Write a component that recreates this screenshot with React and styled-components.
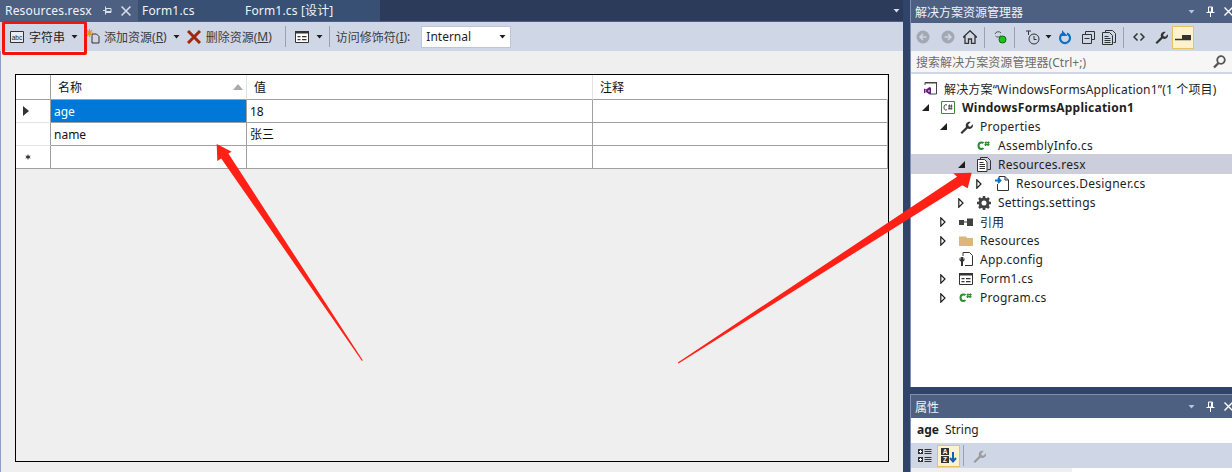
import React from "react";
import styled, { createGlobalStyle } from "styled-components";

const Global = createGlobalStyle`
  html, body { margin: 0; padding: 0; background: #2f4468; }
  body { font-family: "Noto Sans", "Noto Sans CJK SC", sans-serif; font-size: 12px; color: #1e1e1e; }
  #root { width: 1232px; height: 472px; overflow: hidden; }
`;

const Page = styled.div`
  position: relative;
  width: 1232px;
  height: 472px;
  display: flex;
  overflow: hidden;
  background: #2f4468;
`;

const DocColumn = styled.div`
  width: 903px;
  height: 472px;
  display: flex;
  flex-direction: column;
  background: #efefef;
  margin-right: 7px;
`;

const TabBar = styled.div`
  height: 21px;
  flex: none;
  display: flex;
  align-items: center;
  background: #2b3b59;
  border-bottom: 1px solid #4d6082;
`;

const Tab = styled.div`
  height: 21px;
  width: ${p => p.$w}px;
  padding-left: ${p => p.$pad}px;
  box-sizing: border-box;
  display: flex;
  align-items: center;
  background: ${p => (p.$active ? "#4d6082" : "#375074")};
  color: #f1f3f8;
  letter-spacing: 0.17px;
  line-height: 21px;
  white-space: nowrap;
`;

const TabButton = styled.span`
  display: inline-flex;
  margin-left: ${p => p.$ml}px;
`;

const TabFiller = styled.div`
  flex: 1;
  height: 21px;
  display: flex;
  align-items: center;
  justify-content: flex-end;
  padding-right: 3px;
`;

const Toolbar = styled.div`
  flex: none;
  height: ${p => p.$h}px;
  display: flex;
  align-items: center;
  padding-left: ${p => p.$pad || 0}px;
  background: #cfd6e5;
  box-sizing: border-box;
`;

const ToolItem = styled.span`
  flex: none;
  display: inline-flex;
  align-items: center;
  margin-left: ${p => p.$ml || 0}px;
  color: ${p => (p.$dim ? "#3c3c3c" : "#1e1e1e")};
  white-space: nowrap;
`;

const Sep = styled.span`
  flex: none;
  width: 1px;
  height: 21px;
  background: #99a1b3;
  margin-left: ${p => p.$ml}px;
`;

const Select = styled.div`
  flex: none;
  width: 90px;
  height: 22px;
  box-sizing: border-box;
  margin-left: ${p => p.$ml}px;
  padding: 0 4px;
  display: flex;
  align-items: center;
  justify-content: space-between;
  background: #fff;
  border: 1px solid #bcc5dc;
  color: #1e1e1e;
`;

const DocBody = styled.div`
  flex: 1;
  padding: 23px 0 10px 15px;
  box-shadow: inset 1px 0 0 #8f9dc6;
  display: flex;
`;

const GridFrame = styled.div`
  width: 874px;
  height: 388px;
  box-sizing: border-box;
  border: 1px solid #000;
  display: grid;
  grid-template-columns: 35px 196px 346px 295px;
  grid-template-rows: 25px 23px 23px 23px 1fr;
`;

const Cell = styled.div`
  box-sizing: border-box;
  display: flex;
  align-items: center;
  padding-left: ${p => p.$pad ?? 3}px;
  background: ${p => (p.$selected ? "#0078d7" : "#fff")};
  color: ${p => (p.$selected ? "#fff" : "#111")};
  border-right: 1px solid ${p => (p.$softRight ? "#e3e3e3" : "#a0a0a0")};
  border-bottom: 1px solid ${p => (p.$softBottom ? "#e3e3e3" : "#a0a0a0")};
  justify-content: ${p => (p.$between ? "space-between" : "flex-start")};
  padding-right: ${p => (p.$between ? 3 : 0)}px;
`;

const GridEmpty = styled.div`
  grid-column: 1 / -1;
  background: #efefef;
`;

const SidePanel = styled.div`
  width: 322px;
  height: 472px;
  display: flex;
  flex-direction: column;
`;

const Explorer = styled.div`
  height: 387px;
  flex: none;
  display: flex;
  flex-direction: column;
  box-sizing: border-box;
  border-left: 1px solid #7f8fb4;
`;

const TitleBar = styled.div`
  height: ${p => p.$h}px;
  flex: none;
  display: flex;
  align-items: center;
  padding-left: 4px;
  background: #4d6082;
  color: #f0f3f8;
`;

const TitleText = styled.span`
  flex: 1;
`;

const TitleIcons = styled.span`
  display: inline-flex;
  align-items: center;
  gap: 7px;
  margin-right: -1px;
`;

const SearchBox = styled.div`
  height: 23px;
  flex: none;
  box-sizing: border-box;
  display: flex;
  align-items: center;
  justify-content: space-between;
  padding: 0 6px 0 5px;
  background: #f6f6f6;
  color: #6d6d6d;
  letter-spacing: 0.05px;
  border-bottom: 2px solid #cfd6e5;
`;

const Tree = styled.div`
  flex: 1;
  background: #fff;
  padding-top: 5px;
`;

const TreeRow = styled.div`
  height: 19px;
  display: flex;
  align-items: center;
  padding-left: ${p => p.$indent}px;
  background: ${p => (p.$selected ? "#cccedb" : "transparent")};
  box-shadow: ${p => (p.$selected ? "0 -1px 0 #cccedb" : "none")};
  color: #1e1e1e;
  font-weight: ${p => (p.$bold ? 700 : 400)};
  letter-spacing: ${p => p.$ls ?? 0.24}px;
  white-space: nowrap;
`;

const Expander = styled.span`
  flex: none;
  width: 18px;
  display: inline-flex;
  justify-content: center;
`;

const IconSlot = styled.span`
  flex: none;
  width: 14px;
  height: 16px;
  margin-left: 7px;
  margin-right: 7px;
  display: inline-flex;
  align-items: center;
  justify-content: center;
`;

const Properties = styled.div`
  margin-top: 7px;
  flex: 1;
  display: flex;
  flex-direction: column;
  border-left: 1px solid #7f8fb4;
  border-top: 1px solid #7f8fb4;
`;

const InfoLine = styled.div`
  height: 25px;
  flex: none;
  box-sizing: border-box;
  display: flex;
  align-items: center;
  padding: 0 0 2px 6px;
  gap: 6px;
  background: #fff;
  color: #1e1e1e;
`;

const Strong = styled.b`
  font-weight: 700;
`;

const ActiveTool = styled.span`
  flex: none;
  width: ${p => p.$w}px;
  height: ${p => p.$h}px;
  box-sizing: border-box;
  margin-left: ${p => p.$ml}px;
  display: inline-flex;
  align-items: center;
  justify-content: center;
  background: #fdf2cd;
  border: 1px solid #e5c365;
`;

const PropsFooter = styled.div`
  flex: 1;
  display: grid;
  grid-template-columns: 161px 1fr;
`;

const FooterSide = styled.div`
  background: ${p => p.$c};
`;

const CalloutBox = styled.div`
  position: absolute;
  left: 2px;
  top: 21px;
  width: 85px;
  height: 34px;
  box-sizing: border-box;
  border: 3px solid #f3140f;
  border-radius: 2px;
`;

const ArrowLayer = styled.svg`
  position: absolute;
  left: 0;
  top: 0;
  pointer-events: none;
`;

const Ico = ({ w = 16, h = 16, children }) => (
  <svg width={w} height={h} viewBox={`0 0 ${w} ${h}`} style={{ display: "block" }}>{children}</svg>
);

const Caret = ({ c = "#1e1e1e" }) => <Ico w={7} h={4}><path d="M.5 0h6L3.500 3.500z" fill={c} /></Ico>;
const Filled = () => <Ico w={7} h={7}><path d="M7 0v7H0z" fill="#1e1e1e" /></Ico>;
const Hollow = () => <Ico w={6} h={10}><path d="M.8.8v8.400L5 5z" fill="#fff" stroke="#1e1e1e" strokeWidth="1.200" /></Ico>;

const Pin = ({ c = "#fff" }) => (
  <Ico w={9} h={11}><path d="M2.500 1h4v5h-4zM.5 6.500h8M4.500 7v4M5.500 1.500v4.500" fill="none" stroke={c} strokeWidth="1" /></Ico>
);
const PinFlat = ({ c = "#fff" }) => (
  <Ico w={9} h={9}><path d="M3 2.500h5v4H3zM2.500.5v8M0 4.500h2.500M3 5.500h5" fill="none" stroke={c} strokeWidth="1" /></Ico>
);
const Close = ({ c = "#fff", s = 9 }) => (
  <svg width={s} height={s} viewBox="0 0 9 9" style={{ display: "block" }}>
    <path d="M.5.5l8 8M8.500.5l-8 8" stroke={c} strokeWidth="1.400" fill="none" />
  </svg>
);
const Wrench = ({ c = "#333", s = 14 }) => (
  <svg width={s} height={s} viewBox="0 0 14 14" style={{ display: "block" }}>
    <path d="M1.500 12.500 7 7c-.7-2.300.2-4 1.700-4.800 1-.5 2-.6 3-.2L9.200 4.500l.4 1.800 1.800.4L13.800 4.300c.4 1.300.1 2.700-1 3.700-1.200 1-2.700 1.200-4.100.6L3 14z" fill={c} />
  </svg>
);
const CSharp = ({ c = "#2f8a2f" }) => (
  <svg width="14" height="10" viewBox="0 0 14 10" style={{ display: "block" }}>
    <path d="M6.500 2.200C6 1.600 5.300 1.500 4.500 1.500 2.900 1.500 1.500 2.700 1.500 4.800S2.900 8 4.500 8c.8 0 1.500-.2 2-.8" fill="none" stroke={c} strokeWidth="2" />
    <path d="M9 .5 8.500 5M11.500.5 11 5M7.700 1.700h5M7.500 3.700h5" stroke={c} strokeWidth="1.200" fill="none" />
  </svg>
);
const FormIcon = () => (
  <Ico w={14} h={12}>
    <path d="M.5.5h13v11H.5z" fill="#fff" stroke="#333" />
    <path d="M0 0h14v2.500H0zM2.500 5h3v1.200h-3zM2.500 8h3v1.200h-3zM7 5h4.500v1.200H7zM7 8h4.500v1.200H7z" fill="#333" />
  </Ico>
);

const tree = [
  { indent: 5, noExp: true, ls: 0.16, text: "解决方案“WindowsFormsApplication1”(1 个项目)", icon: (
    <Ico w={14} h={15}>
      <path d="M2 4V1.500h11.500V13H7" fill="none" stroke="#444" />
      <path d="M2 1h12v1.500H2z" fill="#444" />
      <path d="M1 7.500v5l2-1.600 3.500 2.600 1.500-.8V6.800l-1.500-.8L3 8.600z" fill="#68217a" />
      <path d="M2.200 9l1 .9-1 .9zM4.800 9.900l1.600-1.100v2.200z" fill="#fff" />
    </Ico>
  ) },
  { indent: 5, exp: "filled", bold: true, text: "WindowsFormsApplication1", icon: (
    <svg width="14" height="13" viewBox="0 0 14 13" style={{ display: "block" }}>
      <path d="M.5.500h13v12H.5z" fill="#fff" stroke="#3a8a3a" />
      <path d="M6 4.300C5.700 3.800 5.200 3.700 4.800 3.700 3.700 3.700 3 4.700 3 6.300S3.700 9 4.800 9c.4 0 .9-.1 1.200-.6" fill="none" stroke="#333" />
      <path d="M8.500 3.500 8 9M10.500 3.500 10 9M7 5h4.500M7 7.300h4.500" fill="none" stroke="#333" strokeWidth=".8" />
    </svg>
  ) },
  { indent: 23, exp: "filled", text: "Properties", icon: <Wrench /> },
  { indent: 41, text: "AssemblyInfo.cs", icon: <CSharp /> },
  { indent: 41, exp: "filled", selected: true, text: "Resources.resx", icon: (
    <Ico w={14} h={15}>
      <path d="M3.500.5h7l3 3v9h-3M3.500.5v2" fill="none" stroke="#333" />
      <path d="M.5 2.500h7l2.500 2.500v9.500H.5z" fill="#fff" stroke="#333" />
      <path d="M2.500 5.500h4M2.500 7.500h5.500M2.500 9.500h5.500M2.500 11.500h5.500" stroke="#333" fill="none" />
    </Ico>
  ) },
  { indent: 59, exp: "hollow", text: "Resources.Designer.cs", icon: (
    <Ico w={14} h={15}>
      <path d="M4 3.500V.5h6l3.500 3.500v10.500h-11V8" fill="#fff" stroke="#333" />
      <path d="M10 .5v3.500h3.500" fill="none" stroke="#333" />
      <path d="M0 4.500h4.500M3 2l2.500 2.500L3 7" fill="none" stroke="#0e70c0" strokeWidth="1.800" />
    </Ico>
  ) },
  { indent: 41, exp: "hollow", text: "Settings.settings", icon: (
    <Ico w={14} h={14}>
      <circle cx="7" cy="7" r="4" fill="none" stroke="#424242" strokeWidth="3" />
      <path d="M7 0v3M7 11v3M0 7h3M11 7h3M2 2l2.200 2.200M9.800 9.800 12 12M12 2 9.800 4.200M4.200 9.800 2 12" stroke="#424242" strokeWidth="2.500" />
    </Ico>
  ) },
  { indent: 23, exp: "hollow", ls: 0, text: "引用", icon: (
    <Ico w={14} h={8}><path d="M0 2h5v5H0zM8 .500h6V8H8z" fill="#424242" /><path d="M5 4h3" stroke="#424242" /></Ico>
  ) },
  { indent: 23, exp: "hollow", text: "Resources", icon: (
    <Ico w={14} h={11}><path d="M0 1.500h7l1 1.500h6v8H0z" fill="#dcb67a" /></Ico>
  ) },
  { indent: 23, text: "App.config", icon: (
    <Ico w={14} h={15}>
      <path d="M4 4V.5h6.500l3 3v10H6" fill="#fff" stroke="#333" />
      <path d="M2 5v2.500h-.5V5C.5 6 .3 7 .5 8c.2.800.8 1.300 1.500 1.500V14h2V9.500C4.800 9.200 5.400 8.700 5.500 8c.2-1-.1-2-1-3v2.500H4V5z" fill="#333" />
    </Ico>
  ) },
  { indent: 23, exp: "hollow", text: "Form1.cs", icon: <FormIcon /> },
  { indent: 23, exp: "hollow", text: "Program.cs", icon: <CSharp /> },
];

export default function App() {
  return (
    <Page>
      <Global />
      <DocColumn>
        <TabBar>
          <Tab $active $w={138} $pad={5}>
            Resources.resx
            <TabButton $ml={11}><PinFlat c="#d8deea" /></TabButton>
            <TabButton $ml={9}><Close c="#d8deea" s={10} /></TabButton>
          </Tab>
          <Tab $w={103} $pad={4}>Form1.cs</Tab>
          <Tab $w={139} $pad={4}>Form1.cs [设计]</Tab>
          <TabFiller><Caret c="#d6dcea" /></TabFiller>
        </TabBar>
        <Toolbar $h={29} $pad={10}>
          <ToolItem>
            <Ico w={14} h={12}>
              <path d="M.5.500h13v11H.5z" fill="#e8ebf2" stroke="#333" />
              <text x="7" y="8.500" textAnchor="middle" fontSize="6.500" fill="#222" fontFamily="Liberation Sans">abc</text>
            </Ico>
          </ToolItem>
          <ToolItem $ml={5}>字符串</ToolItem>
          <ToolItem $ml={6}><Caret /></ToolItem>
          <ToolItem $ml={8}>
            <Ico w={14} h={15}>
              <path d="M6 5h4.500L13 7.500v6.500H6z" fill="none" stroke="#333" />
              <path d="M3.500 0v8M0 4h7M1 1.200l5 5.600M6 1.200 1 6.800" stroke="#d99a1d" strokeWidth="1.200" />
            </Ico>
          </ToolItem>
          <ToolItem $ml={4} $dim>添加资源(<u>R</u>)</ToolItem>
          <ToolItem $ml={6}><Caret /></ToolItem>
          <ToolItem $ml={7}>
            <Ico w={14} h={14}><path d="M1 1l12 12M13 1 1 13" stroke="#a1260d" strokeWidth="3" /></Ico>
          </ToolItem>
          <ToolItem $ml={5} $dim>删除资源(<u>M</u>)</ToolItem>
          <Sep $ml={13} />
          <ToolItem $ml={9}><FormIcon /></ToolItem>
          <ToolItem $ml={7}><Caret /></ToolItem>
          <Sep $ml={6} />
          <ToolItem $ml={6} $dim>访问修饰符(<u>I</u>):</ToolItem>
          <Select $ml={11}>
            Internal
            <Caret />
          </Select>
        </Toolbar>
        <DocBody>
          <GridFrame>
            <Cell />
            <Cell $pad={7} $between $softRight>名称<svg width="10" height="6" viewBox="0 0 10 6"><path d="M0 6 5 0l5 6z" fill="#a9a9a9" /></svg></Cell>
            <Cell $pad={7} $softRight>值</Cell>
            <Cell $pad={7} $softRight>注释</Cell>

            <Cell $pad={7} $softBottom><Ico w={6} h={10}><path d="M0 0l6 5-6 5z" fill="#333" /></Ico></Cell>
            <Cell $selected>age</Cell>
            <Cell>18</Cell>
            <Cell />

            <Cell $softBottom />
            <Cell>name</Cell>
            <Cell>张三</Cell>
            <Cell />

            <Cell $pad={9}><svg width="6" height="6" viewBox="0 0 6 6"><path d="M3 0l.8 2 2-.4L4.500 3l1.300 1.400-2-.4L3 6l-.8-2-2 .4L1.500 3 .2 1.600l2 .4z" fill="#333" /></svg></Cell>
            <Cell />
            <Cell />
            <Cell />
            <GridEmpty />
          </GridFrame>
        </DocBody>
      </DocColumn>

      <SidePanel>
        <Explorer>
          <TitleBar $h={23}>
            <TitleText>解决方案资源管理器</TitleText>
            <TitleIcons>
              <Caret c="#b9c4da" />
              <TabButton $ml={4}><Pin /></TabButton>
              <TabButton $ml={2}><Close /></TabButton>
            </TitleIcons>
          </TitleBar>
          <Toolbar $h={28} $pad={5}>
            <ToolItem><svg width="14" height="14" viewBox="0 0 14 14"><circle cx="7" cy="7" r="6.500" fill="#a3a8b3" /><path d="M10.500 7h-6M7 4 4 7l3 3" stroke="#cfd6e5" strokeWidth="1.500" fill="none" /></svg></ToolItem>
            <ToolItem $ml={11}><svg width="14" height="14" viewBox="0 0 14 14"><circle cx="7" cy="7" r="6.500" fill="#a3a8b3" /><path d="M3.500 7h6M7 4l3 3-3 3" stroke="#cfd6e5" strokeWidth="1.500" fill="none" /></svg></ToolItem>
            <ToolItem $ml={8}><Ico w={14} h={14}><path d="M7 .8 13.500 7H12v6.500H8.500V9h-3v4.500H2V7H.5z" fill="#cfd6e5" stroke="#333" strokeWidth="1.300" /></Ico></ToolItem>
            <Sep $ml={7} />
            <ToolItem $ml={8}>
              <Ico w={14} h={14}>
                <path d="M2 4a3.500 3.500 0 0 1 6-1M7.500 5.500a3 3 0 0 1-5 .5" fill="none" stroke="#555" />
                <circle cx="9.500" cy="9.500" r="3.500" fill="#1ec11e" stroke="#0d6b0d" />
              </Ico>
            </ToolItem>
            <Sep $ml={7} />
            <ToolItem $ml={10}>
              <Ico w={16} h={15}>
                <path d="M1 1h5M3.500 1v4" stroke="#333" fill="none" />
                <circle cx="9" cy="9" r="5" fill="none" stroke="#333" />
                <path d="M9 6v3.500h2.500" fill="none" stroke="#333" />
              </Ico>
            </ToolItem>
            <ToolItem $ml={4}><Caret /></ToolItem>
            <ToolItem $ml={6}>
              <Ico w={14} h={15}>
                <path d="M9 3.500a5 5 0 1 1-4.500.3" fill="none" stroke="#0e70c0" strokeWidth="2.200" />
                <path d="M4 0v6H9.500z" fill="#0e70c0" />
              </Ico>
            </ToolItem>
            <ToolItem $ml={10}>
              <Ico w={13} h={13}>
                <path d="M3.500 3V.5h9v8H10" fill="none" stroke="#333" />
                <path d="M.5 3.500h9v9h-9zM2.500 7.500h5" fill="none" stroke="#333" />
              </Ico>
            </ToolItem>
            <ToolItem $ml={7}>
              <Ico w={15} h={15}>
                <path d="M3.500 2.500V.5h7l3 3v9h-2" fill="none" stroke="#333" />
                <path d="M.5 2.500h7l3 3v9H.5z" fill="#cfd6e5" stroke="#333" />
                <path d="M2.500 6.500h4M2.500 8.500h6M2.500 10.500h6M2.500 12.500h6" stroke="#333" />
              </Ico>
            </ToolItem>
            <Sep $ml={6} />
            <ToolItem $ml={9}><Ico w={12} h={8}><path d="M4.500 .5 1 4l3.500 3.500M7.500 .5 11 4 7.500 7.500" fill="none" stroke="#333" strokeWidth="1.500" /></Ico></ToolItem>
            <ToolItem $ml={9}><Wrench c="#333" /></ToolItem>
            <ActiveTool $ml={4} $w={22} $h={23}>
              <Ico w={16} h={7}><path d="M0 5.500h16" stroke="#333" strokeWidth="1.500" /><path d="M7 1h9v4H7z" fill="#333" /></Ico>
            </ActiveTool>
          </Toolbar>
          <SearchBox>
            搜索解决方案资源管理器(Ctrl+;)
            <Ico w={13} h={14}>
              <circle cx="8" cy="5" r="3.800" fill="none" stroke="#555" strokeWidth="1.800" />
              <path d="M5.500 8 1 12.500" stroke="#555" strokeWidth="2.400" />
            </Ico>
          </SearchBox>
          <Tree>
            {tree.map(r => (
              <TreeRow key={r.text} $indent={r.indent} $selected={r.selected} $bold={r.bold} $ls={r.ls}>
                {!r.noExp && (
                  <Expander>
                    {r.exp === "filled" && <Filled />}
                    {r.exp === "hollow" && <Hollow />}
                  </Expander>
                )}
                <IconSlot>{r.icon}</IconSlot>
                {r.text}
              </TreeRow>
            ))}
          </Tree>
        </Explorer>
        <Properties>
          <TitleBar $h={23}>
            <TitleText>属性</TitleText>
            <TitleIcons>
              <Caret c="#b9c4da" />
              <TabButton $ml={4}><Pin /></TabButton>
              <TabButton $ml={2}><Close /></TabButton>
            </TitleIcons>
          </TitleBar>
          <InfoLine><Strong>age</Strong>String</InfoLine>
          <Toolbar $h={25} $pad={7}>
            <ToolItem>
              <Ico w={14} h={14}>
                <path d="M0 0h5v5H0zM0 8h5v5H0z" fill="#333" />
                <path d="M1 2.500h3M2.500 1v3M1 10.500h3M2.500 9v3" stroke="#fff" />
                <path d="M6.500 .5h7M6.500 2.500h7M6.500 4.500h7M6.500 8.500h7M6.500 10.500h7M6.500 12.500h7" stroke="#333" />
              </Ico>
            </ToolItem>
            <ActiveTool $ml={5} $w={23} $h={22}>
              <Ico w={16} h={16}>
                <path d="M0 0h8v7H0zM0 8h8v7H0z" fill="#333" />
                <text x="4" y="6" textAnchor="middle" fontSize="6.500" fontWeight="700" fill="#fff" fontFamily="Liberation Sans">A</text>
                <text x="4" y="14" textAnchor="middle" fontSize="6.500" fontWeight="700" fill="#fff" fontFamily="Liberation Sans">Z</text>
                <path d="M12 4v9M9 10l3 3.500 3-3.500" fill="none" stroke="#0e60b8" strokeWidth="2" />
              </Ico>
            </ActiveTool>
            <Sep $ml={3} />
            <ToolItem $ml={8}><Wrench c="#9a9a9a" /></ToolItem>
          </Toolbar>
          <PropsFooter>
            <FooterSide $c="#efefef" />
            <FooterSide $c="#ffffff" />
          </PropsFooter>
        </Properties>
      </SidePanel>

      <CalloutBox />
      <ArrowLayer width="1232" height="472" viewBox="0 0 1232 472">
        <path d="M216.700 144 231.700 151.700 228.400 153.600 362.800 360.300 362 361 221.200 158.400 217.300 161z" fill="#ff2016" />
        <path d="M971.700 172.700 967.700 188.300 962.400 185.200 678.500 363.400 677.800 362.400 957 176.800 953.300 173.300z" fill="#ff2016" />
      </ArrowLayer>
    </Page>
  );
}
